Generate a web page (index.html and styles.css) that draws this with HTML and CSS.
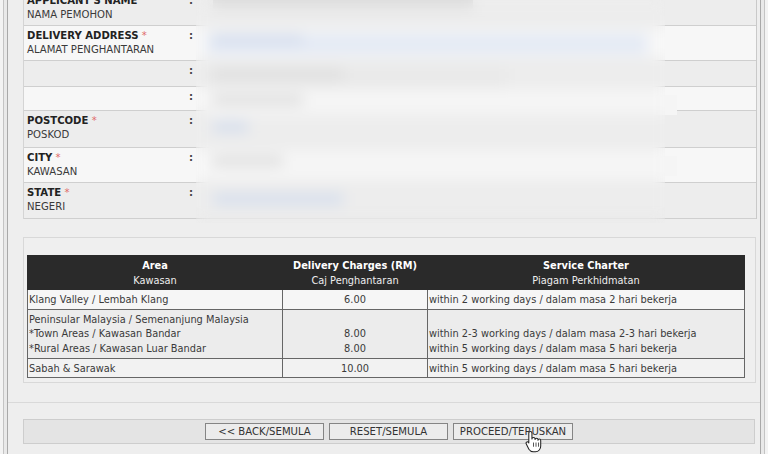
FILE: index.html
```html
<!DOCTYPE html>
<html>
<head>
<meta charset="utf-8">
<link rel="stylesheet" href="styles.css">
</head>
<body>
<div class="frame">
  <div class="inner">
    <div class="form">
      <div class="row shade r-a">
        <div class="label"><b>APPLICANT'S NAME</b><br>NAMA PEMOHON</div>
        <div class="colon">:</div>
        <div class="value"><span class="blob g w1"></span></div>
      </div>
      <div class="row light r-b">
        <div class="label"><b>DELIVERY ADDRESS</b> <span class="req">*</span><br>ALAMAT PENGHANTARAN</div>
        <div class="colon">:</div>
        <div class="value"><span class="field blue"><span class="blob b w2"></span></span></div>
      </div>
      <div class="row shade r-c">
        <div class="label"></div>
        <div class="colon">:</div>
        <div class="value"><span class="field plain"><span class="blob g w3"></span></span></div>
      </div>
      <div class="row light r-d">
        <div class="label"></div>
        <div class="colon">:</div>
        <div class="value"><span class="field white"><span class="blob g w4"></span></span></div>
      </div>
      <div class="row shade r-e">
        <div class="label"><b>POSTCODE</b> <span class="req">*</span><br>POSKOD</div>
        <div class="colon">:</div>
        <div class="value"><span class="blob b w5"></span></div>
      </div>
      <div class="row light r-f">
        <div class="label"><b>CITY</b> <span class="req">*</span><br>KAWASAN</div>
        <div class="colon">:</div>
        <div class="value"><span class="field white"><span class="blob g w6"></span></span></div>
      </div>
      <div class="row shade r-g">
        <div class="label"><b>STATE</b> <span class="req">*</span><br>NEGERI</div>
        <div class="colon">:</div>
        <div class="value"><span class="blob b w7"></span></div>
      </div>
      <div class="veil"></div>
    </div>

    <div class="charges">
      <table class="rates">
        <colgroup>
          <col class="k1">
          <col class="k2">
          <col class="k3">
        </colgroup>
        <thead>
          <tr>
            <th><b>Area</b><br><span>Kawasan</span></th>
            <th><b>Delivery Charges (RM)</b><br><span>Caj Penghantaran</span></th>
            <th><b>Service Charter</b><br><span>Piagam Perkhidmatan</span></th>
          </tr>
        </thead>
        <tbody>
          <tr class="r1">
            <td>Klang Valley / Lembah Klang</td>
            <td class="num">6.00</td>
            <td>within 2 working days / dalam masa 2 hari bekerja</td>
          </tr>
          <tr class="r2">
            <td>Peninsular Malaysia / Semenanjung Malaysia<br>*Town Areas / Kawasan Bandar<br>*Rural Areas / Kawasan Luar Bandar</td>
            <td class="num">&nbsp;<br>8.00<br>8.00</td>
            <td>&nbsp;<br>within 2-3 working days / dalam masa 2-3 hari bekerja<br>within 5 working days / dalam masa 5 hari bekerja</td>
          </tr>
          <tr class="r3">
            <td>Sabah &amp; Sarawak</td>
            <td class="num">10.00</td>
            <td>within 5 working days / dalam masa 5 hari bekerja</td>
          </tr>
        </tbody>
      </table>
    </div>

    <div class="sep"></div>

    <div class="actions">
      <button class="btn b-back">&lt;&lt; BACK/SEMULA</button>
      <button class="btn b-reset">RESET/SEMULA</button>
      <button class="btn b-go">PROCEED/TERUSKAN</button>
    </div>
    <div class="foot"></div>
  </div>
</div>
<svg class="cursor" viewBox="0 0 16 22" width="17" height="23" aria-hidden="true">
  <path d="M5 1.5c.8 0 1.5.7 1.5 1.5v5.5c0-.8.7-1.4 1.5-1.4s1.5.6 1.5 1.4v.6c0-.8.7-1.3 1.4-1.3s1.4.6 1.4 1.3v.8c0-.7.6-1.2 1.3-1.2s1.3.6 1.3 1.3v5.2c0 3-2 5.6-5 5.6H7.6c-1.900 0-3-.9-4-2.4L1.1 13.3c-.5-.8-.2-1.6.5-1.9.6-.3 1.3 0 1.7.6l.2.4V3c0-.8.7-1.5 1.5-1.5z" fill="#fff" stroke="#222" stroke-width="1" stroke-linejoin="round"/>
  <path d="M8 12v4M10.4 12v4M12.8 12v4" stroke="#333" stroke-width=".8"/>
</svg>
</body>
</html>
```

FILE: styles.css
```css
html, body {
  margin: 0;
  padding: 0;
}
body {
  width: 768px;
  height: 454px;
  overflow: hidden;
  background: #f3f3f3;
  font-family: "DejaVu Sans", Verdana, sans-serif;
  font-size: 10.1px;
  color: #333;
  position: relative;
}
.frame {
  margin: 0 3px 0 3px;
  padding: 0 3px;
  border-left: 1px solid #c4c4c4;
  border-right: 1px solid #c4c4c4;
  background: #e9e9e9;
  height: 470px;
}
.inner {
  border-left: 1px solid #a9a9a9;
  border-right: 1px solid #a9a9a9;
  background: #eeeeee;
  height: 470px;
}

/* form */
.form {
  position: relative;
  margin: -9px 3px 0 15px;
  border-left: 1px solid #d4d4d4;
  border-right: 1px solid #c9c9c9;
}
.row {
  display: grid;
  grid-template-columns: 165px 12px 1fr;
  box-sizing: border-box;
  border-bottom: 1px solid #cfcfcf;
}
.r-a { height: 35px; }
.r-b { height: 35px; }
.r-c { height: 26px; }
.r-d { height: 24px; }
.r-e { height: 37px; }
.r-f { height: 35px; }
.r-g { height: 36px; }
.row.shade { background: #ededed; }
.row.light { background: #f7f7f7; }
.label {
  padding: 3px 0 0 3px;
  line-height: 13.5px;
  color: #3a3a3a;
  white-space: nowrap;
}
.label b { color: #222; }
.req { color: #e06a6a; }
.colon {
  padding-top: 3px;
  line-height: 13.5px;
  font-weight: bold;
  color: #444;
}
.value {
  padding: 3px 0 0 6px;
}
.field {
  display: block;
  height: 20px;
  width: 440px;
}
.field.blue { background: #e4eaf5; }
.field.plain { background: #e9e9e9; width: 300px; }
.field.white { background: #f5f5f5; width: 470px; }
.blob {
  display: block;
  height: 10px;
  margin: 5px 0 0 6px;
}
.blob.g { background: #dedede; }
.blob.b { background: #d4dded; }
.w1 { width: 260px; background: #e4e4e4; }
.w2 { width: 90px; }
.w3 { width: 130px; }
.w4 { width: 90px; background: #eaeaea; }
.w5 { width: 35px; margin-top: 8px; }
.w6 { width: 70px; }
.w7 { width: 130px; margin-top: 8px; }
.veil {
  position: absolute;
  left: 172px;
  top: 0;
  width: 469px;
  height: 232px;
  backdrop-filter: blur(7px);
  -webkit-backdrop-filter: blur(7px);
}

/* charges */
.charges {
  margin: 18px 4px 0 15px;
  border: 1px solid #d8d8d8;
  background: #efefef;
  padding: 17px 0 4px 3px;
}
.rates {
  width: 717px;
  table-layout: fixed;
  border-collapse: collapse;
  border: 1px solid #555;
  color: #3a3a3a;
  font-size: 9.8px;
}
.k1 { width: 255px; }
.k2 { width: 145px; }
.k3 { width: 317px; }
.rates th {
  background: #2a2a2a;
  color: #fff;
  line-height: 15px;
  padding: 2px 0 1px;
  text-align: center;
  border: 1px solid #2a2a2a;
  white-space: nowrap;
}
.rates th span { font-weight: normal; color: #eee; }
.rates td {
  border: 1px solid #666;
  line-height: 14.5px;
  padding: 3px 1px 1px 1px;
  vertical-align: top;
  white-space: nowrap;
  overflow: hidden;
}
.rates .r2 td { line-height: 14.8px; }
.rates td.num { text-align: center; }
.r1 td { background: #f6f6f6; }
.r2 td { background: #ececec; }
.r3 td { background: #f2f2f2; }

/* separator + buttons */
.sep {
  margin-top: 19px;
  border-top: 1px solid #d9d9d9;
}
.actions {
  margin: 16px 5px 0 15px;
  border: 1px solid #cdcdcd;
  background: #e4e4e4;
  display: flex;
  justify-content: center;
  align-items: flex-start;
  gap: 5px;
  padding-top: 3px;
  box-sizing: border-box;
  height: 25px;
}
.btn {
  height: 17px;
  padding: 0;
  margin: 0;
  border: 1px solid #858585;
  background: #ececec;
  font-family: "DejaVu Sans", Verdana, sans-serif;
  font-size: 10.1px;
  color: #333;
  line-height: 15px;
}
.b-back { width: 119px; }
.b-reset { width: 119px; }
.b-go { width: 120px; }
.foot {
  height: 10px;
  background: #eeeeee;
}
.cursor {
  position: absolute;
  left: 525px;
  top: 430px;
}
```
